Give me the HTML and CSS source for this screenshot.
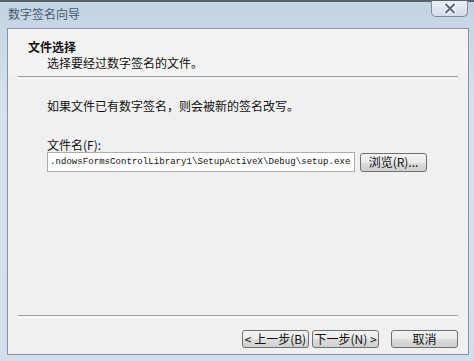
FILE: index.html
```html
<!DOCTYPE html>
<html lang="zh-CN">

<head>
  <meta charset="UTF-8">
  <title>数字签名向导</title>
  <link rel="stylesheet" href="styles.css">
</head>

<body>
  <div class="window">
    <div class="titlebar">
      <span class="title">数字签名向导</span>
      <button class="close-btn">
        <svg width="14" height="11" viewBox="0 0 14 11">
          <path d="M3 1.5 L11 9.5 M11 1.5 L3 9.5" stroke="#fff" stroke-width="4" stroke-linecap="round"/>
          <path d="M3 1.5 L11 9.5 M11 1.5 L3 9.5" stroke="#5a6472" stroke-width="2" stroke-linecap="round"/>
        </svg>
      </button>
    </div>
    <div class="client">
      <div class="header">
        <div class="header-title">文件选择</div>
        <div class="header-sub">选择要经过数字签名的文件。</div>
      </div>
      <div class="separator"></div>
      <div class="content">
        <div class="note">如果文件已有数字签名，则会被新的签名改写。</div>
        <div class="field-label">文件名(F):</div>
        <div class="field-row">
          <div class="textbox">.ndowsFormsControlLibrary1\SetupActiveX\Debug\setup.exe</div>
          <button class="button browse">浏览(R)...</button>
        </div>
      </div>
      <div class="separator"></div>
      <div class="footer">
        <button class="button">&lt; 上一步(B)</button>
        <button class="button">下一步(N) &gt;</button>
        <button class="button cancel">取消</button>
      </div>
    </div>
  </div>
</body>

</html>
```

FILE: styles.css
```css
body {
  margin: 0;
  padding: 0;
  font-family: "Noto Sans CJK SC", "Liberation Sans", sans-serif;
  font-size: 12px;
  color: #111;
  background-color: #cfdbe8;
}

.window {
  width: 474px;
  height: 361px;
  display: flex;
  flex-direction: column;
  background: linear-gradient(to bottom, #c4d3e3, #d6e2ef 30%, #d2deeb);
  border-top: 2px solid #58616b;
  box-sizing: border-box;
}

.titlebar {
  height: 26px;
  display: flex;
  justify-content: space-between;
  align-items: flex-start;
  padding-left: 8px;
  padding-right: 6px;
}

.title {
  margin-top: 5px;
  color: #46586c;
  font-size: 12px;
  line-height: 14px;
}

.close-btn {
  width: 37px;
  height: 16px;
  margin-top: -1px;
  padding: 0;
  border: 1px solid #7d8a99;
  border-top: none;
  border-radius: 0 0 5px 5px;
  background: linear-gradient(to bottom, #e9eff6, #d3dce7);
  display: flex;
  align-items: center;
  justify-content: center;
}

.client {
  flex: 1;
  margin: 0 5px 6px 7px;
  border: 1px solid #8794a4;
  background-color: #f0f0f0;
  display: flex;
  flex-direction: column;
}

.header {
  height: 47px;
  box-sizing: border-box;
  padding: 10px 0 0 20px;
  background-color: #f3f3f3;
}

.header-title {
  font-weight: bold;
  line-height: 16px;
}

.header-sub {
  padding-left: 19px;
  line-height: 16px;
}

.separator {
  margin: 0 10px;
  height: 1px;
  border-top: 1px solid #a0a0a0;
  border-bottom: 1px solid #ffffff;
}

.content {
  flex: 1;
  padding: 19px 0 0 39px;
}

.note {
  line-height: 16px;
}

.field-label {
  margin-top: 23px;
  line-height: 16px;
}

.field-row {
  display: flex;
  align-items: center;
  gap: 5px;
  margin-top: -1px;
}

.textbox {
  width: 308px;
  height: 20px;
  box-sizing: border-box;
  border: 1px solid #abadb3;
  background-color: #fff;
  font-family: "Liberation Mono", monospace;
  font-size: 9px;
  letter-spacing: 0.06px;
  line-height: 18px;
  padding-left: 2px;
  white-space: nowrap;
  overflow: hidden;
}

.button {
  width: 67px;
  height: 18px;
  padding: 0;
  border: 1px solid #707070;
  border-radius: 3px;
  background: linear-gradient(to bottom, #f2f2f2 0%, #ebebeb 50%, #dddddd 51%, #cfcfcf 100%);
  font-family: "Noto Sans CJK SC", "Liberation Sans", sans-serif;
  font-size: 12px;
  line-height: 16px;
  color: #111;
}

.browse {
  height: 19px;
}

.footer {
  display: flex;
  justify-content: flex-end;
  gap: 3px;
  padding: 12px 10px 6px 0;
}

.cancel {
  margin-left: 9px;
}
```
